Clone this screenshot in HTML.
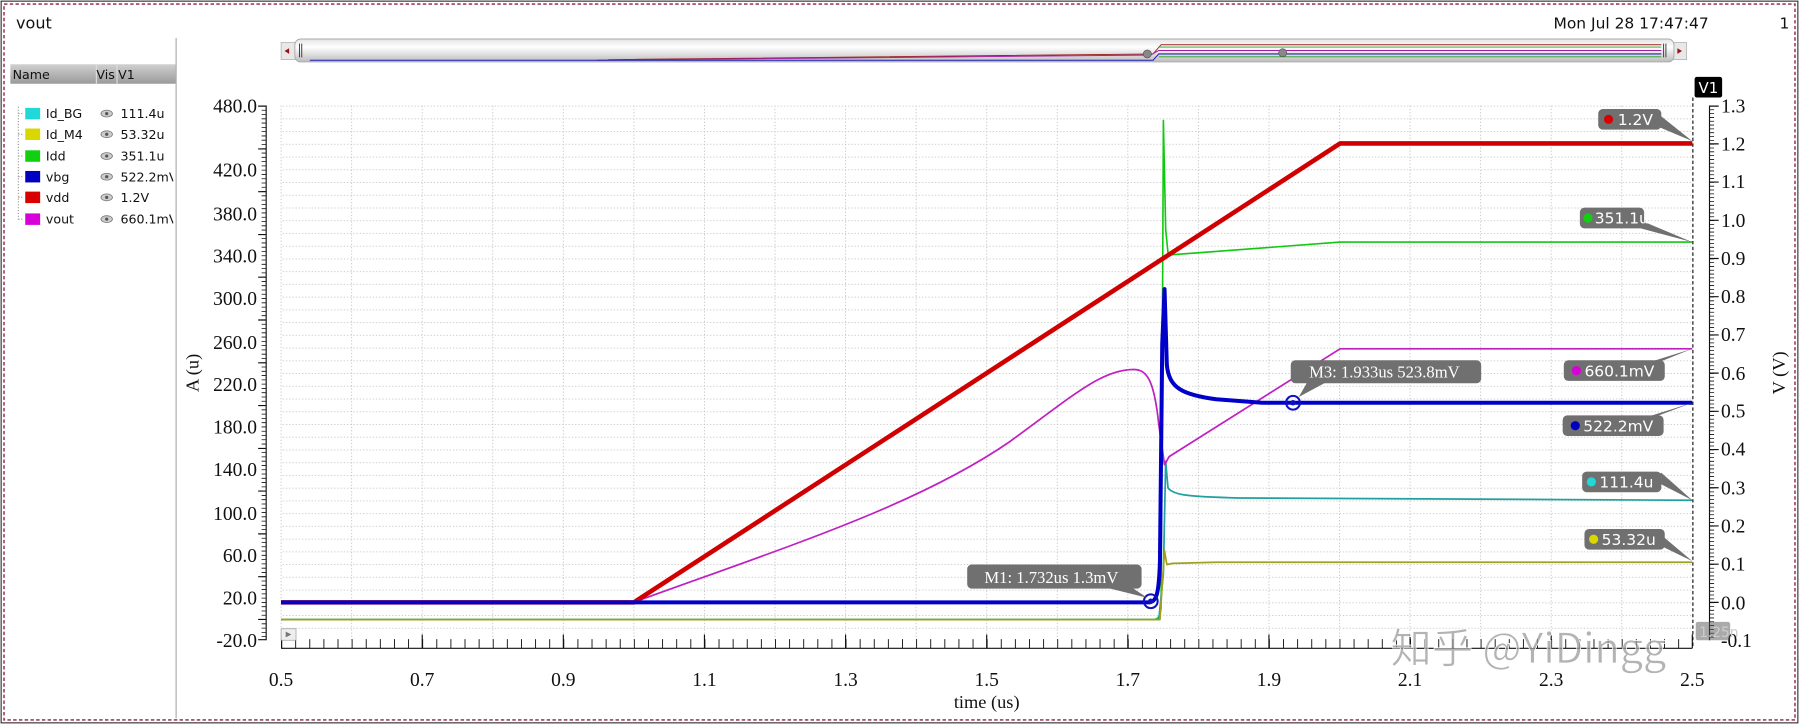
<!DOCTYPE html>
<html><head><meta charset="utf-8"><style>
html,body{margin:0;padding:0;background:#fff;width:1799px;height:724px;overflow:hidden}
svg{display:block}
.s{font-family:"DejaVu Sans","Liberation Sans",sans-serif}
.r{font-family:"Liberation Serif","DejaVu Serif",serif}
</style></head><body>
<svg width="1799" height="724" viewBox="0 0 1568 631" preserveAspectRatio="none" xmlns="http://www.w3.org/2000/svg">
<defs>
<pattern id="hg" x="0" y="92" width="1568" height="11.1" patternUnits="userSpaceOnUse">
<line x1="0" y1="0.5" x2="1568" y2="0.5" stroke="#c8c8c8" stroke-width="0.8" stroke-dasharray="1.2 1.6"/>
</pattern>
<linearGradient id="sb" x1="0" y1="0" x2="0" y2="1">
<stop offset="0" stop-color="#e4e4e4"/><stop offset="0.35" stop-color="#ffffff"/><stop offset="1" stop-color="#bcbcbc"/>
</linearGradient>
<linearGradient id="hd" x1="0" y1="0" x2="0" y2="1">
<stop offset="0" stop-color="#d0d0d0"/><stop offset="1" stop-color="#9a9a9a"/>
</linearGradient>
<clipPath id="lp"><rect x="0" y="0" width="151" height="631"/></clipPath>
</defs>
<rect x="0" y="0" width="1568" height="631" fill="#fff"/>
<rect x="1" y="1" width="1566" height="629" fill="none" stroke="#333" stroke-width="1"/>
<rect x="3.5" y="3.5" width="1561" height="624" fill="none" stroke="#8a2040" stroke-width="1.2" stroke-dasharray="3 2"/>

<text x="14" y="25" class="s" font-size="14" fill="#111">vout</text>
<text x="1354" y="25" class="s" font-size="13.5" fill="#111">Mon Jul 28 17:47:47</text>
<text x="1551" y="25" class="s" font-size="13.5" fill="#111">1</text>

<!-- left panel -->
<line x1="153.5" y1="33" x2="153.5" y2="626" stroke="#aaa"/>
<rect x="9" y="56" width="144" height="17" fill="url(#hd)"/>
<line x1="84" y1="56" x2="84" y2="73" stroke="#ddd"/>
<line x1="102" y1="56" x2="102" y2="73" stroke="#ddd"/>
<text x="11" y="69" class="s" font-size="11" fill="#111">Name</text>
<text x="84" y="69" class="s" font-size="11" fill="#111">Vis</text>
<text x="103" y="69" class="s" font-size="11" fill="#111">V1</text>
<path d="M16 93V192" stroke="#999" stroke-dasharray="1 1.5"/>
<g class="s" font-size="11" fill="#111" clip-path="url(#lp)">
<g transform="translate(0,99)"><path d="M16 0H21" stroke="#999" stroke-dasharray="1 1.5"/><rect x="22" y="-5" width="13" height="10" fill="#20d8d8"/><text x="40" y="4">Id_BG</text><ellipse cx="93" cy="0" rx="5" ry="3" fill="#ccc" stroke="#777" stroke-width=".7"/><circle cx="93" cy="0" r="1.4" fill="#555"/><text x="105" y="4">111.4u</text></g>
<g transform="translate(0,117)"><path d="M16 0H21" stroke="#999" stroke-dasharray="1 1.5"/><rect x="22" y="-5" width="13" height="10" fill="#d8d800"/><text x="40" y="4">Id_M4</text><ellipse cx="93" cy="0" rx="5" ry="3" fill="#ccc" stroke="#777" stroke-width=".7"/><circle cx="93" cy="0" r="1.4" fill="#555"/><text x="105" y="4">53.32u</text></g>
<g transform="translate(0,136)"><path d="M16 0H21" stroke="#999" stroke-dasharray="1 1.5"/><rect x="22" y="-5" width="13" height="10" fill="#10d010"/><text x="40" y="4">Idd</text><ellipse cx="93" cy="0" rx="5" ry="3" fill="#ccc" stroke="#777" stroke-width=".7"/><circle cx="93" cy="0" r="1.4" fill="#555"/><text x="105" y="4">351.1u</text></g>
<g transform="translate(0,154)"><path d="M16 0H21" stroke="#999" stroke-dasharray="1 1.5"/><rect x="22" y="-5" width="13" height="10" fill="#0000c0"/><text x="40" y="4">vbg</text><ellipse cx="93" cy="0" rx="5" ry="3" fill="#ccc" stroke="#777" stroke-width=".7"/><circle cx="93" cy="0" r="1.4" fill="#555"/><text x="105" y="4">522.2mV</text></g>
<g transform="translate(0,172)"><path d="M16 0H21" stroke="#999" stroke-dasharray="1 1.5"/><rect x="22" y="-5" width="13" height="10" fill="#d80000"/><text x="40" y="4">vdd</text><ellipse cx="93" cy="0" rx="5" ry="3" fill="#ccc" stroke="#777" stroke-width=".7"/><circle cx="93" cy="0" r="1.4" fill="#555"/><text x="105" y="4">1.2V</text></g>
<g transform="translate(0,191)"><path d="M16 0H21" stroke="#999" stroke-dasharray="1 1.5"/><rect x="22" y="-5" width="13" height="10" fill="#d800d8"/><text x="40" y="4">vout</text><ellipse cx="93" cy="0" rx="5" ry="3" fill="#ccc" stroke="#777" stroke-width=".7"/><circle cx="93" cy="0" r="1.4" fill="#555"/><text x="105" y="4">660.1mV</text></g>
</g>

<!-- scrollbar -->
<rect x="245" y="37" width="13" height="15" fill="#e8e8e8" stroke="#aaa" stroke-width=".6"/>
<path d="M248 44.5l4-2.5v5z" fill="#a01010"/>
<rect x="1457" y="37" width="13" height="15" fill="#e8e8e8" stroke="#aaa" stroke-width=".6"/>
<path d="M1466 44.5l-4-2.5v5z" fill="#a01010"/>
<rect x="257" y="34" width="1202" height="20" rx="5" fill="url(#sb)" stroke="#aaa" stroke-width=".8"/>
<path d="M261 38v12M263 38v12" stroke="#333" stroke-width=".8"/>
<path d="M1450 38v12M1452 38v12" stroke="#333" stroke-width=".8"/>
<path d="M530 52L1005 47L1012 39H1448" stroke="#a02020" fill="none" stroke-width=".8"/>
<path d="M520 52.5L1003 48L1010 44H1448" stroke="#a020a0" fill="none" stroke-width=".8"/>
<path d="M270 52.5H1005L1010 47H1448" stroke="#2020b0" fill="none" stroke-width=".9"/>
<path d="M1010 41H1448M1010 49.5H1448" stroke="#20a020" fill="none" stroke-width=".8"/>
<circle cx="1000" cy="47" r="3.5" fill="#888" stroke="#555" stroke-width=".6"/>
<circle cx="1118" cy="46" r="3.5" fill="#888" stroke="#555" stroke-width=".6"/>

<!-- grid -->
<rect x="245" y="92" width="1230" height="466" fill="url(#hg)"/>
<g stroke="#c8c8c8" stroke-width="0.8" stroke-dasharray="1.2 1.6">
<path d="M245 92V558M306.5 92V558M368 92V558M429.5 92V558M491 92V558M552.5 92V558M614 92V558M675.5 92V558M737 92V558M798.5 92V558M860 92V558M921.5 92V558M983 92V558M1044.5 92V558M1106 92V558M1167.5 92V558M1229 92V558M1290.5 92V558M1352 92V558M1413.5 92V558"/>
</g>
<line x1="1475.5" y1="85" x2="1475.5" y2="565" stroke="#111" stroke-width="1" stroke-dasharray="3 2"/>

<!-- left axis -->
<line x1="232" y1="92" x2="232" y2="558" stroke="#111"/>
<line x1="230" y1="92" x2="230" y2="558" stroke="#111" stroke-width="4" stroke-dasharray="0.7 3.03"/>
<g stroke="#111"><path d="M225 92.5H232M225 129.8H232M225 167.1H232M225 204.4H232M225 241.6H232M225 278.9H232M225 316.2H232M225 353.5H232M225 390.8H232M225 428H232M225 465.3H232M225 502.6H232M225 539.9H232M225 557.5H232"/></g>
<g class="r" font-size="17" fill="#111" text-anchor="end">
<text x="224" y="98">480.0</text><text x="224" y="154">420.0</text><text x="224" y="192">380.0</text><text x="224" y="229">340.0</text><text x="224" y="266">300.0</text><text x="224" y="304">260.0</text><text x="224" y="341">220.0</text><text x="224" y="378">180.0</text><text x="224" y="415">140.0</text><text x="224" y="453">100.0</text><text x="224" y="490">60.0</text><text x="224" y="527">20.0</text><text x="224" y="564">-20.0</text>
</g>
<text transform="translate(173,325) rotate(-90)" class="r" font-size="16" fill="#111" text-anchor="middle">A (u)</text>

<!-- right axis -->
<line x1="1490" y1="92" x2="1490" y2="558" stroke="#111"/>
<line x1="1492" y1="92" x2="1492" y2="558" stroke="#111" stroke-width="4" stroke-dasharray="0.7 2.63"/>
<g stroke="#111"><path d="M1490 92.5H1498M1490 125.4H1498M1490 158.7H1498M1490 192H1498M1490 225.3H1498M1490 258.6H1498M1490 291.9H1498M1490 325.2H1498M1490 358.5H1498M1490 391.8H1498M1490 425.1H1498M1490 458.4H1498M1490 491.7H1498M1490 525H1498"/></g>
<g class="r" font-size="17" fill="#111">
<text x="1500" y="98">1.3</text><text x="1500" y="131">1.2</text><text x="1500" y="164">1.1</text><text x="1500" y="198">1.0</text><text x="1500" y="231">0.9</text><text x="1500" y="264">0.8</text><text x="1500" y="297">0.7</text><text x="1500" y="331">0.6</text><text x="1500" y="364">0.5</text><text x="1500" y="397">0.4</text><text x="1500" y="431">0.3</text><text x="1500" y="464">0.2</text><text x="1500" y="497">0.1</text><text x="1500" y="531">0.0</text><text x="1500" y="564">-0.1</text>
</g>
<text transform="translate(1556,325) rotate(-90)" class="r" font-size="16" fill="#111" text-anchor="middle">V (V)</text>
<rect x="1477" y="67" width="24" height="18" rx="2" fill="#000"/>
<text x="1489" y="81" class="s" font-size="13" fill="#fff" text-anchor="middle">V1</text>

<!-- bottom axis -->
<line x1="245" y1="565" x2="1475" y2="565" stroke="#111"/>
<line x1="245" y1="561" x2="1475" y2="561" stroke="#111" stroke-width="8" stroke-dasharray="0.8 11.5"/>
<g stroke="#111"><path d="M245.5 553V565M368 553V565M491 553V565M614 553V565M737 553V565M860 553V565M983 553V565M1106 553V565M1229 553V565M1352 553V565M1475 553V565"/></g>
<g class="r" font-size="17" fill="#111" text-anchor="middle">
<text x="245" y="598">0.5</text><text x="368" y="598">0.7</text><text x="491" y="598">0.9</text><text x="614" y="598">1.1</text><text x="737" y="598">1.3</text><text x="860" y="598">1.5</text><text x="983" y="598">1.7</text><text x="1106" y="598">1.9</text><text x="1229" y="598">2.1</text><text x="1352" y="598">2.3</text><text x="1475" y="598">2.5</text>
</g>
<text x="860" y="617" class="r" font-size="16" fill="#111" text-anchor="middle">time (us)</text>
<rect x="245" y="548" width="13" height="10" fill="#eee" stroke="#999" stroke-width=".6"/>
<path d="M249 550.5l5 2.5-5 2.5z" fill="#777"/>

<!-- curves -->
<g fill="none" stroke-linejoin="round">
<path d="M245 540H1005C1009 540 1011 538 1012 530L1014 105L1016 200L1018 220L1022 222L1168 211H1475" stroke="#10c810" stroke-width="1.4"/>
<path d="M245 540H1010L1014 500L1016 402L1018 425C1022 432 1040 433 1080 434L1475 436" stroke="#20a0a0" stroke-width="1.5"/>
<path d="M245 540H1011L1015 480L1017 492L1022 491L1060 490H1475" stroke="#a0a020" stroke-width="1.5"/>
<path d="M245 525H552C690 475 800 440 880 385C935 345 960 322 988 322C1000 322 1006 332 1010 370L1015 405L1019 398L1168 304H1475" stroke="#c020c0" stroke-width="1.5"/>
<path d="M245 525H552.5L1168 125H1475" stroke="#d00000" stroke-width="4"/>
<path d="M245 525H1002C1008 524 1010 518 1011 490L1013 300L1015 252L1017 318C1019 338 1030 344 1060 348L1100 351H1475" stroke="#0000c8" stroke-width="3.5"/>
</g>

<!-- markers -->
<circle cx="1003" cy="524" r="6" fill="none" stroke="#1010c0" stroke-width="1.8"/><circle cx="1003" cy="524" r="2.4" fill="#1010c0"/>
<circle cx="1127" cy="351" r="6" fill="none" stroke="#1010c0" stroke-width="1.8"/><circle cx="1127" cy="351" r="2.4" fill="#1010c0"/>

<g fill="#707070">
<path d="M960 511L1000 521L985 511z"/><rect x="843" y="492" width="152" height="21" rx="4"/>
<path d="M1140 332L1132 346L1158 332z"/><rect x="1125" y="314" width="166" height="20" rx="4"/>
<path d="M1430 104L1475 123L1440 95z"/><rect x="1393" y="95" width="55" height="18" rx="4"/>
<path d="M1415 195L1475 211L1425 190z"/><rect x="1377" y="181" width="56" height="18" rx="4"/>
<path d="M1430 322L1475 304L1440 315z"/><rect x="1363" y="314" width="88" height="18" rx="4"/>
<path d="M1430 368L1475 351L1440 362z"/><rect x="1362" y="362" width="88" height="18" rx="4"/>
<path d="M1440 418L1475 436L1448 412z"/><rect x="1379" y="411" width="69" height="18" rx="4"/>
<path d="M1440 472L1475 489L1450 468z"/><rect x="1381" y="461" width="70" height="18" rx="4"/>
</g>
<g class="r" font-size="14.5" fill="#fff">
<text x="858" y="508">M1: 1.732us 1.3mV</text>
<text x="1141" y="329">M3: 1.933us 523.8mV</text>
</g>
<g class="s" font-size="13.5" fill="#fff">
<circle cx="1402" cy="104" r="4" fill="#d80000"/><text x="1410" y="109">1.2V</text>
<circle cx="1384" cy="190" r="4" fill="#10d010"/><text x="1390" y="195">351.1u</text>
<circle cx="1374" cy="323" r="4" fill="#d800d8"/><text x="1381" y="328">660.1mV</text>
<circle cx="1373" cy="371" r="4" fill="#0000c0"/><text x="1380" y="376">522.2mV</text>
<circle cx="1387" cy="420" r="4" fill="#20d8d8"/><text x="1394" y="425">111.4u</text>
<circle cx="1389" cy="470" r="4" fill="#d8d800"/><text x="1396" y="475">53.32u</text>
</g>
<rect x="1478" y="542" width="30" height="16" rx="2" fill="#555" opacity=".5"/>
<text x="1481" y="555" class="s" font-size="12" fill="#ccc">1.25n</text>

<!-- watermark -->
<text x="1212" y="578" font-family="'Noto Sans CJK SC','Liberation Sans',sans-serif" font-size="36" fill="#9a9a9a" fill-opacity=".75" stroke="#fff" stroke-width=".6">知乎 @YiDingg</text>
</svg>
</body></html>
